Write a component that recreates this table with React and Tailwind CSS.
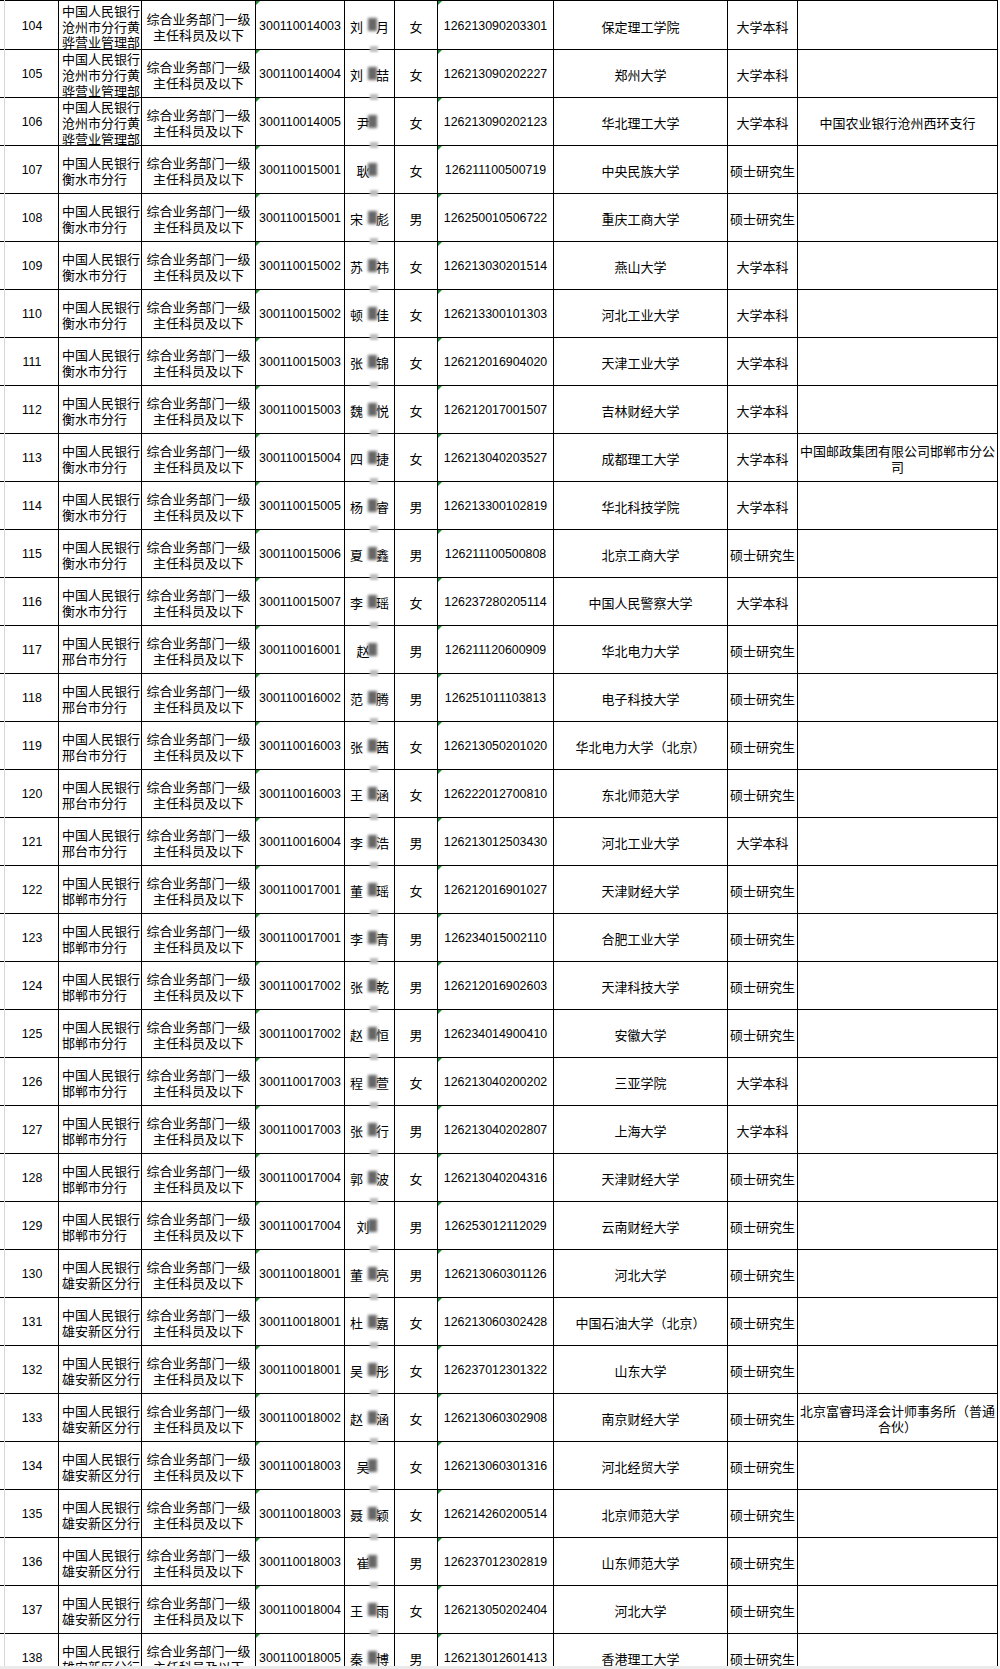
import React from 'react';

const A = ['中国人民银行', '沧州市分行黄', '骅营业管理部'];
const B = ['中国人民银行', '衡水市分行'];
const C = ['中国人民银行', '邢台市分行'];
const D = ['中国人民银行', '邯郸市分行'];
const E = ['中国人民银行', '雄安新区分行'];

const BK = '大学本科';
const SS = '硕士研究生';

// [序号, 单位, 职位代码, 姓名(*为打码位), 性别, 准考证号, 学校, 学历, 工作单位]
const rows = [
  [104, A, '300110014003', '刘*月', '女', '126213090203301', '保定理工学院', BK, []],
  [105, A, '300110014004', '刘*喆', '女', '126213090202227', '郑州大学', BK, []],
  [106, A, '300110014005', '尹*', '女', '126213090202123', '华北理工大学', BK, ['中国农业银行沧州西环支行']],
  [107, B, '300110015001', '耿*', '女', '126211100500719', '中央民族大学', SS, []],
  [108, B, '300110015001', '宋*彪', '男', '126250010506722', '重庆工商大学', SS, []],
  [109, B, '300110015002', '苏*祎', '女', '126213030201514', '燕山大学', BK, []],
  [110, B, '300110015002', '顿*佳', '女', '126213300101303', '河北工业大学', BK, []],
  [111, B, '300110015003', '张*锦', '女', '126212016904020', '天津工业大学', BK, []],
  [112, B, '300110015003', '魏*悦', '女', '126212017001507', '吉林财经大学', BK, []],
  [113, B, '300110015004', '四*捷', '女', '126213040203527', '成都理工大学', BK, ['中国邮政集团有限公司邯郸市分公', '司']],
  [114, B, '300110015005', '杨*睿', '男', '126213300102819', '华北科技学院', BK, []],
  [115, B, '300110015006', '夏*鑫', '男', '126211100500808', '北京工商大学', SS, []],
  [116, B, '300110015007', '李*瑶', '女', '126237280205114', '中国人民警察大学', BK, []],
  [117, C, '300110016001', '赵*', '男', '126211120600909', '华北电力大学', SS, []],
  [118, C, '300110016002', '范*腾', '男', '126251011103813', '电子科技大学', SS, []],
  [119, C, '300110016003', '张*茜', '女', '126213050201020', '华北电力大学（北京）', SS, []],
  [120, C, '300110016003', '王*涵', '女', '126222012700810', '东北师范大学', SS, []],
  [121, C, '300110016004', '李*浩', '男', '126213012503430', '河北工业大学', BK, []],
  [122, D, '300110017001', '董*瑶', '女', '126212016901027', '天津财经大学', SS, []],
  [123, D, '300110017001', '李*青', '男', '126234015002110', '合肥工业大学', SS, []],
  [124, D, '300110017002', '张*乾', '男', '126212016902603', '天津科技大学', SS, []],
  [125, D, '300110017002', '赵*恒', '男', '126234014900410', '安徽大学', SS, []],
  [126, D, '300110017003', '程*萱', '女', '126213040200202', '三亚学院', BK, []],
  [127, D, '300110017003', '张*行', '男', '126213040202807', '上海大学', BK, []],
  [128, D, '300110017004', '郭*波', '女', '126213040204316', '天津财经大学', SS, []],
  [129, D, '300110017004', '刘*', '男', '126253012112029', '云南财经大学', SS, []],
  [130, E, '300110018001', '董*亮', '男', '126213060301126', '河北大学', SS, []],
  [131, E, '300110018001', '杜*嘉', '女', '126213060302428', '中国石油大学（北京）', SS, []],
  [132, E, '300110018001', '吴*彤', '女', '126237012301322', '山东大学', SS, []],
  [133, E, '300110018002', '赵*涵', '女', '126213060302908', '南京财经大学', SS, ['北京富睿玛泽会计师事务所（普通', '合伙）']],
  [134, E, '300110018003', '吴*', '女', '126213060301316', '河北经贸大学', SS, []],
  [135, E, '300110018003', '聂*颖', '女', '126214260200514', '北京师范大学', SS, []],
  [136, E, '300110018003', '崔*', '男', '126237012302819', '山东师范大学', SS, []],
  [137, E, '300110018004', '王*雨', '女', '126213050202404', '河北大学', SS, []],
  [138, E, '300110018005', '秦*博', '男', '126213012601413', '香港理工大学', SS, []],
];

const Tri = () => (
  <svg className="absolute left-0 top-0" width="4" height="4" viewBox="0 0 4 4">
    <polygon points="0,0 4,0 0,4" fill="#1f8b33" />
  </svg>
);

const Name = ({ name, first }) => (
  <>
    {[...name].map((ch, i) =>
      ch === '*' ? <span key={i} className="inline-block w-[13px]" /> : <span key={i}>{ch}</span>
    )}
    <div className="absolute left-[23px] top-[17px] w-[9px] h-[13px] bg-[#666666] blur-[1.5px]" />
    {!first && <div className="absolute left-[25px] top-[-4px] w-[8px] h-[6px] bg-[#bdbdbd] blur-[1px]" />}
  </>
);

const Lines = ({ lines }) => lines.map((l, i) => <div key={i}>{l}</div>);

export default function App() {
  const num = "font-['Liberation_Sans','Noto_Sans_CJK_SC',sans-serif] text-[12.4px]";
  return (
    <div className="w-[1000px] h-[1669px] bg-white overflow-hidden text-black font-['Noto_Sans_CJK_SC','Noto_Sans',sans-serif] text-[13px] leading-[15.8px]">
      <div className="relative h-[1666px] overflow-hidden">
        <div className="grid grid-cols-[59px_83px_114px_89px_50px_43px_116px_174px_70px_200px]">
          {rows.map((r, idx) => {
            const first = idx === 0;
            const base = `relative flex items-center border-r border-b border-black pt-[3px] ${first ? 'h-[50px] border-t' : 'h-[48px]'}`;
            return (
              <React.Fragment key={r[0]}>
                <div className={`${base} justify-center pl-[6px] ${num} text-[11.6px]`}>{r[0]}</div>
                <div className={`${base} flex-col !items-start justify-center pl-[3px]`}>
                  <Lines lines={r[1]} />
                </div>
                <div className={`${base} flex-col justify-center text-center`}>
                  <div>综合业务部门一级</div>
                  <div>主任科员及以下</div>
                </div>
                <div className={`${base} justify-center ${num}`}>
                  <Tri />
                  {r[2]}
                </div>
                <div className={`${base} justify-center`}>
                  <Name name={r[3]} first={first} />
                </div>
                <div className={`${base} justify-center`}>{r[4]}</div>
                <div className={`${base} justify-center ${num}`}>
                  <Tri />
                  {r[5]}
                </div>
                <div className={`${base} justify-center`}>{r[6]}</div>
                <div className={`${base} justify-center`}>{r[7]}</div>
                <div className={`${base} flex-col justify-center text-center`}>
                  <Lines lines={r[8]} />
                </div>
              </React.Fragment>
            );
          })}
        </div>
        <div className="absolute left-[4px] top-0 bottom-0 w-px bg-[#d6d6d6]" />
      </div>
      <div className="h-[3px] bg-[#ebebeb]" />
    </div>
  );
}
